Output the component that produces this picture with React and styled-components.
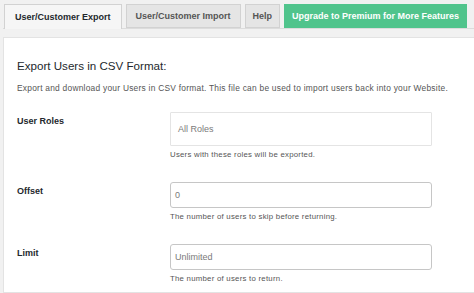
import React from 'react'
import styled, { createGlobalStyle } from 'styled-components'

const GlobalStyle = createGlobalStyle`
  html, body {
    margin: 0;
    padding: 0;
    background: #f1f1f1;
    font-family: "Liberation Sans", Arial, sans-serif;
    overflow: hidden;
  }
`

const Page = styled.div`
  width: 474px;
  height: 293px;
  padding: 4px 0 0 3px;
  box-sizing: border-box;
  display: flex;
  flex-direction: column;
`

const TabBar = styled.div`
  display: flex;
  gap: 4px;
  padding-left: 1px;
  border-bottom: 1px solid #dcdcdc;
  height: 25px;
  box-sizing: border-box;
`

const Tab = styled.div`
  display: flex;
  align-items: center;
  padding: 0 ${({ $pad }) => $pad || 11}px;
  font-size: 9px;
  font-weight: 700;
  white-space: nowrap;
  box-sizing: border-box;
  height: ${({ $active }) => ($active ? '25px' : '24px')};
  margin-bottom: ${({ $active }) => ($active ? '-1px' : '0')};
  border: 1px solid ${({ $premium }) => ($premium ? '#50c48c' : '#d2d2d2')};
  border-bottom: ${({ $active }) => ($active ? 'none' : undefined)};
  background: ${({ $active, $premium }) =>
    $premium ? '#50c48c' : $active ? '#f6f6f6' : '#e5e5e5'};
  color: ${({ $active, $premium }) =>
    $premium ? '#ffffff' : $active ? '#23282d' : '#555555'};
`

const Panel = styled.div`
  margin-top: 8px;
  flex: 1;
  background: #ffffff;
  border: 1px solid #e3e3e3;
  border-right: none;
  padding: 19px 0 0 13px;
`

const Heading = styled.h2`
  margin: 0;
  font-size: 11.6px;
  font-weight: 400;
  color: #23282d;
  line-height: 18px;
`

const Desc = styled.p`
  margin: 6px 0 0;
  font-size: 8.4px;
  letter-spacing: 0.25px;
  color: #555555;
  line-height: 14px;
  white-space: nowrap;
`

const Form = styled.div`
  margin-top: 17px;
  display: flex;
  flex-direction: column;
  gap: 22px;
`

const Row = styled.div`
  display: grid;
  grid-template-columns: 153px 262px;
  align-items: start;
`

const Label = styled.label`
  font-size: 9px;
  font-weight: 700;
  color: #23282d;
  line-height: 11px;
  padding-top: ${({ $top }) => $top || 4}px;
`

const Field = styled.div`
  display: flex;
  flex-direction: column;
`

const Input = styled.div`
  height: ${({ $tall }) => ($tall ? 34 : 26)}px;
  box-sizing: border-box;
  border: 1px solid ${({ $soft }) => ($soft ? '#e4e4e4' : '#c6c6c6')};
  border-radius: ${({ $soft }) => ($soft ? 1 : 3)}px;
  padding: 0 ${({ $soft }) => ($soft ? 7 : 4)}px;
  display: flex;
  align-items: center;
  font-size: 9px;
  color: #7a7a7a;
  background: #fff;
`

const Help = styled.span`
  margin-top: 4px;
  font-size: 7.8px;
  letter-spacing: 0.25px;
  color: #555555;
  line-height: 10px;
`

export default function App() {
  return (
    <>
      <GlobalStyle />
      <Page>
        <TabBar>
          <Tab $active $pad={10}>User/Customer Export</Tab>
          <Tab $pad={9}>User/Customer Import</Tab>
          <Tab $pad={7}>Help</Tab>
          <Tab $premium $pad={7}>Upgrade to Premium for More Features</Tab>
        </TabBar>
        <Panel>
          <Heading>Export Users in CSV Format:</Heading>
          <Desc>
            Export and download your Users in CSV format. This file can be used to import users back into your Website.
          </Desc>
          <Form>
            <Row>
              <Label>User Roles</Label>
              <Field>
                <Input $tall $soft>All Roles</Input>
                <Help>Users with these roles will be exported.</Help>
              </Field>
            </Row>
            <Row>
              <Label>Offset</Label>
              <Field>
                <Input>0</Input>
                <Help>The number of users to skip before returning.</Help>
              </Field>
            </Row>
            <Row>
              <Label>Limit</Label>
              <Field>
                <Input>Unlimited</Input>
                <Help>The number of users to return.</Help>
              </Field>
            </Row>
          </Form>
        </Panel>
      </Page>
    </>
  )
}
